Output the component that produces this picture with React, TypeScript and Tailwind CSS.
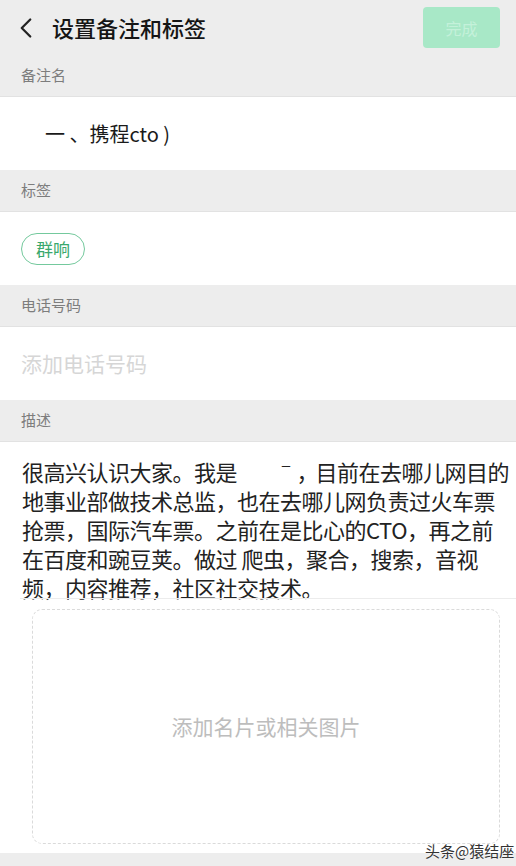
import { ChevronLeft } from "lucide-react";

const font = { fontFamily: '"Noto Sans CJK SC", "Noto Sans", sans-serif' };

function Label({ text }: { text: string }) {
  return (
    <div className="h-[42px] flex items-center px-[21px] bg-[#ededed] text-[15px] text-[#7d7d7d] border-b border-[#e2e2e2]">
      {text}
    </div>
  );
}

export default function App() {
  return (
    <div style={font} className="w-[516px] h-[866px] bg-[#ededed] flex flex-col relative overflow-hidden">
      {/* Header */}
      <div className="h-[55px] flex items-center justify-between pl-[9px] pr-[16px]">
        <div className="flex items-center">
          <ChevronLeft className="w-[34px] h-[34px] text-[#222]" strokeWidth={1.6} />
          <span className="ml-[9px] text-[22px] font-medium text-[#151515]">设置备注和标签</span>
        </div>
        <div className="w-[77px] h-[41px] rounded-[4px] bg-[#a8e8c7] flex items-center justify-center text-[16px] text-[#c4f1da]">
          完成
        </div>
      </div>

      <Label text="备注名" />
      <div className="h-[73px] bg-white flex items-center pl-[45px] text-[20px] text-[#1a1a1a]">
        <span>一 、携程cto )</span>
      </div>

      <Label text="标签" />
      <div className="h-[73px] bg-white flex items-center px-[21px]">
        <span className="h-[32px] px-[14px] flex items-center rounded-full border-[1.5px] border-[#74c99d] text-[17px] text-[#3aa86d]">
          群响
        </span>
      </div>

      <Label text="电话号码" />
      <div className="h-[73px] bg-white flex items-center px-[21px] text-[21px] text-[#d6d6d6]">
        添加电话号码
      </div>

      <Label text="描述" />
      <div className="flex-1 bg-white flex flex-col">
        <div className="pt-[15px] pl-[22px] text-[22px] leading-[29px] text-[#222] tracking-[-0.5px]">
          <div className="whitespace-nowrap">
            很高兴认识大家。我是<span className="inline-block w-[38px]" />ˉ<span className="tracking-[-3px]">，</span>目前在去哪儿网目的
          </div>
          <div className="whitespace-nowrap">地事业部做技术总监，也在去哪儿网负责过火车票</div>
          <div className="whitespace-nowrap">抢票，国际汽车票。之前在是比心的CTO，再之前</div>
          <div className="whitespace-nowrap">在百度和豌豆荚。做过 爬虫，聚合，搜索，音视</div>
          <div className="whitespace-nowrap">频，内容推荐，社区社交技术。</div>
        </div>
        <div className="ml-[20px] mt-[-4px] h-px bg-[#ececec]" />
        <div className="mt-[10px] ml-[32px] w-[468px] h-[235px] rounded-[10px] border-[1.5px] border-dashed border-[#dadada] flex items-center justify-center text-[21px] text-[#bdbdbd]">
          添加名片或相关图片
        </div>
      </div>
      <div className="h-[13px] bg-[#ededed]" />

      {/* watermark */}
      <div className="absolute left-[425px] top-[841px] text-[15px] leading-[20px] text-[#333] [text-shadow:0_0_2px_#fff]">
        头条@猿结座
      </div>
    </div>
  );
}
